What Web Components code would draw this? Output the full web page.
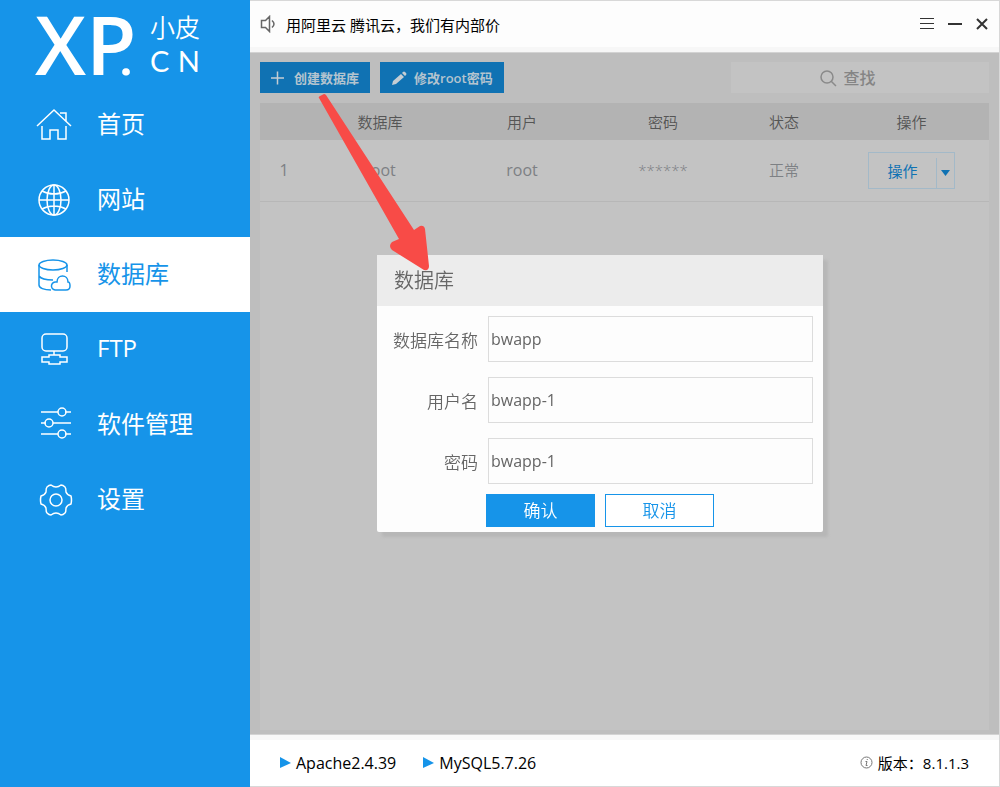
<!DOCTYPE html>
<html lang="zh-CN">
<head>
<meta charset="utf-8">
<title>小皮面板</title>
<style>
  body {
    margin: 0;
    font-family: "Open Sans", "Noto Sans CJK SC", sans-serif;
    font-size: 15px;
    color: #000;
  }
</style>
</head>
<body>
<xp-app></xp-app>

<script>
const icons = {
  home: '<path d="M1 18 18 2l17 16M24 5h6v8M6 18v13h8v-9h8v9h8V18"/>',
  globe: '<circle cx="18" cy="17" r="15"/><ellipse cx="18" cy="17" rx="7" ry="15"/><path d="M18 2v30M3 17h30M6 8c7 4 17 4 24 0M6 26c7-4 17-4 24 0"/>',
  database: '<ellipse cx="17" cy="7" rx="14" ry="5"/><path d="M3 7v20c0 3 5 5 12 5M31 7v7M3 18c2 3 7 4 14 4M20 32a4 4 0 0 1-1-8q2 0 2 0c0-8 11-8 11 0q2 0 2 4t-4 4z"/>',
  ftp: '<rect x="6" y="1" width="25" height="17" rx="4"/><path d="M18 18v4M13 22h11v2h7v5h-7v2H13v-2H6v-5h7z"/>',
  sliders: '<path d="M5 4h17M29 4h6M5 15h5M17 15h18M5 26h17M29 26h6"/><circle cx="26" cy="4" r="4"/><circle cx="13" cy="15" r="4"/><circle cx="26" cy="26" r="4"/>',
  gear: '<path d="M15 2q5 4 10 0 2 0 4 2 1 1 1 5 1 3 5 4 1 4 0 8-4 1-5 4 0 4-1 5-2 2-4 2-5-4-10 0-2 0-4-2-1-1-1-5-1-3-5-4-1-4 0-8 4-1 5-4 0-4 1-5 2-2 4-2z"/><circle cx="20" cy="17" r="6"/>'
}

// 基底類別，把 template 放進 shadow root
class XpElement extends HTMLElement {
  constructor() {
    super();
    this.attachShadow({ mode: 'open' });
    this.shadowRoot.innerHTML = this.render();
  }
  render() {
    return '<slot></slot>'
  }
}

class XpLogo extends XpElement {
  render() {
    return `
      <style>
        :host {
          display: flex;
          align-items: center;
          height: 87px;
          padding-left: 35px;
          box-sizing: border-box;
          color: #fff;
        }
        .big {
          display: flex;
          align-items: baseline;
          width: 115px;
          padding-bottom: 2px;
          font: 600 82px/84px "Open Sans", sans-serif;
        }
        .dot {
          margin-left: -18px;
          font: 500 56px/56px Roboto, sans-serif;
        }
        .small {
          width: 50px;
          font-size: 25px;
          line-height: 34px;
          font-weight: 350;
        }
        .small div {
          display: flex;
          justify-content: space-between;
        }
        .cn {
          font-family: Lato, sans-serif;
          font-size: 29px;
          font-weight: 400;
        }
      </style>
      <div class="big"><span>XP</span><span class="dot">.</span></div>
      <div class="small">
        <div>小皮</div>
        <div class="cn"><span>C</span><span>N</span></div>
      </div>
    `
  }
}

class XpNavItem extends XpElement {
  render() {
    return `
      <style>
        :host {
          display: block;
          color: #fff;
        }
        :host([active]) {
          background: #fff;
          color: #1694e9;
        }
        a {
          display: flex;
          align-items: center;
          gap: 21px;
          height: 75px;
          padding-left: 36px;
          color: inherit;
          font-size: 24px;
          text-decoration: none;
        }
        span {
          padding-bottom: 4px;
        }
        svg {
          width: 40px;
          height: 34px;
          fill: none;
          stroke: currentColor;
          stroke-width: 1.5;
          overflow: visible;
        }
      </style>
      <a href="#"><svg viewBox="0 0 40 34">${icons[this.getAttribute('icon')]}</svg><span><slot></slot></span></a>
    `
  }
}

class XpSidebar extends XpElement {
  render() {
    return `
      <style>
        :host {
          display: block;
          flex: none;
          width: 250px;
          background: #1694e9;
        }
      </style>
      <xp-logo></xp-logo>
      <nav>
        <xp-nav-item icon="home">首页</xp-nav-item>
        <xp-nav-item icon="globe">网站</xp-nav-item>
        <xp-nav-item icon="database" active>数据库</xp-nav-item>
        <xp-nav-item icon="ftp">FTP</xp-nav-item>
        <xp-nav-item icon="sliders">软件管理</xp-nav-item>
        <xp-nav-item icon="gear">设置</xp-nav-item>
      </nav>
    `
  }
}

class XpTitlebar extends XpElement {
  render() {
    return `
      <style>
        :host {
          display: flex;
          align-items: center;
          height: 53px;
          padding: 0 10px 5px;
          box-sizing: border-box;
          border-top: 1px solid #d8d8d8;
          border-bottom: 1px solid #d3d3d3;
          background: linear-gradient(#fdfdfd 46px, #f7f7f7 46px);
        }
        p {
          flex: 1;
          margin: 0 0 0 10px;
        }
        svg {
          display: block;
          fill: none;
          stroke: #333;
        }
        .speaker {
          stroke: #666;
          stroke-width: 1.5;
        }
        .tools {
          display: flex;
          gap: 12px;
        }
        button {
          padding: 0;
          border: 0;
          background: none;
        }
      </style>
      <svg class="speaker" width="16" height="18" viewBox="0 0 16 18"><path d="M1.500 5.500h4l4-4v15l-4-4h-4zM12 5.500q4 3.500 0 7"/></svg>
      <p>用阿里云 腾讯云，我们有内部价</p>
      <div class="tools">
        <button aria-label="菜单"><svg width="16" height="16"><path d="M1 2.500h14M1 7.500h14M1 12.500h14"/></svg></button>
        <button aria-label="最小化"><svg width="16" height="16" stroke-width="2"><path d="M1 8h14"/></svg></button>
        <button aria-label="关闭"><svg width="14" height="16" stroke-width="2"><path d="m2 3 10 10M12 3 2 13"/></svg></button>
      </div>
    `
  }
}

class XpToolButton extends XpElement {
  render() {
    return `
      <style>
        :host {
          display: block;
        }
        button {
          display: flex;
          align-items: center;
          gap: 6px;
          height: 31px;
          padding: 0 11px 0 10px;
          border: 0;
          background: #1072b3;
          color: #b4c4cf;
          font: 600 13px/20px "Open Sans", "Noto Sans CJK SC", sans-serif;
        }
      </style>
      <button><slot name="icon"></slot><slot></slot></button>
    `
  }
}

class XpToolbar extends XpElement {
  render() {
    return `
      <style>
        :host {
          display: flex;
          gap: 10px;
          color: #808080;
        }
        .search {
          display: flex;
          align-items: center;
          justify-content: center;
          gap: 7px;
          width: 258px;
          height: 31px;
          margin-left: auto;
          background: #c3c3c3;
        }
        input {
          width: 58px;
          padding: 0;
          border: 0;
          background: none;
          font: 500 16px/24px "Open Sans", "Noto Sans CJK SC", sans-serif;
        }
        input::placeholder {
          color: #858585;
          opacity: 1;
        }
      </style>
      <xp-tool-button>
        <svg slot="icon" width="18" height="16" stroke="#c5cdd3" stroke-width="1.5"><path d="M1 8h13M7.500 1.500v13"/></svg>创建数据库
      </xp-tool-button>
      <xp-tool-button>
        <svg slot="icon" width="18" height="16" fill="#c5cdd3"><path d="m2 15 1-4 8-7 3 3-8 7zM12 3l1-1q1-1 2 0l1 1q1 1 0 2l-1 1z"/></svg>修改root密码
      </xp-tool-button>
      <label class="search">
        <svg width="18" height="18" fill="none" stroke="#8a8a8a" stroke-width="1.5"><circle cx="8" cy="8" r="6"/><path d="m12 12 5 5"/></svg>
        <input type="text" placeholder="查找" aria-label="查找">
      </label>
    `
  }
}

class XpActionButton extends XpElement {
  render() {
    return `
      <style>
        :host {
          display: inline-flex;
          width: 87px;
          height: 37px;
          box-sizing: border-box;
          border: 1px solid #a3b9c8;
          vertical-align: middle;
        }
        button {
          padding: 0;
          border: 0;
          background: none;
          color: #1072b3;
          font: inherit;
        }
        .text {
          flex: 1;
          font-weight: 400;
        }
        .more {
          width: 18px;
          margin-top: 5px;
          border-left: 1px solid #a3b9c8;
        }
        svg {
          display: block;
          margin: auto;
        }
      </style>
      <button class="text"><slot></slot></button>
      <button class="more" aria-label="更多"><svg width="9" height="6"><path d="M0 0h9L4.500 6z" fill="#1072b3"/></svg></button>
    `
  }
}

class XpTable extends XpElement {
  render() {
    return `
      <style>
        :host {
          display: block;
          flex: 1;
          background: #c3c3c3;
        }
        table {
          width: 100%;
          table-layout: fixed;
          border-collapse: collapse;
          text-align: center;
        }
        th {
          height: 37px;
          padding: 0;
          background: #b3b3b3;
          color: #555;
          font-weight: 350;
        }
        td {
          height: 59px;
          padding: 0 0 2px;
          border-bottom: 1px solid #b7b7b7;
          color: #7d8084;
          font-weight: 350;
        }
        td:last-child {
          height: 61px;
          padding: 0;
        }
        .latin {
          font-size: 16px;
          font-weight: 400;
        }
      </style>
      <table>
        <colgroup>
          <col style="width: 48px"><col style="width: 144px"><col style="width: 140px">
          <col style="width: 142px"><col style="width: 100px"><col style="width: 155px">
        </colgroup>
        <thead>
          <tr><th></th><th>数据库</th><th>用户</th><th>密码</th><th>状态</th><th>操作</th></tr>
        </thead>
        <tbody>
          <tr>
            <td class="latin">1</td><td class="latin">root</td><td class="latin">root</td><td>******</td><td>正常</td>
            <td><xp-action-button>操作</xp-action-button></td>
          </tr>
        </tbody>
      </table>
    `
  }
}

class XpStatusbar extends XpElement {
  render() {
    return `
      <style>
        :host {
          display: flex;
          align-items: center;
          gap: 27px;
          height: 53px;
          padding: 4px 30px 0;
          box-sizing: border-box;
          border-top: 1px solid #d3d3d3;
          border-bottom: 1px solid #d8d8d8;
          background: linear-gradient(#f7f7f7 5px, #fff 5px);
        }
        span {
          display: flex;
          align-items: center;
          gap: 5px;
        }
        .service {
          font-size: 16px;
        }
        .version {
          margin-left: auto;
        }
      </style>
      <span class="service"><svg width="11" height="11"><path d="M0 0v11l11-5z" fill="#1694e9"/></svg>Apache2.4.39</span>
      <span class="service"><svg width="11" height="11"><path d="M0 0v11l11-5z" fill="#1694e9"/></svg>MySQL5.7.26</span>
      <span class="version">
        <svg width="13" height="13" fill="none" stroke="#777"><circle cx="6.500" cy="6.500" r="5.500"/><path d="M7.500 3 7 4M5.500 5.500H7L6 9.500h1.500" /></svg>版本：8.1.1.3
      </span>
    `
  }
}

class XpField extends XpElement {
  render() {
    return `
      <style>
        :host {
          display: flex;
          align-items: center;
          gap: 10px;
        }
        label {
          width: 91px;
          color: #666;
          font-size: 17px;
          font-weight: 350;
          text-align: right;
        }
        input {
          flex: 1;
          min-width: 0;
          height: 46px;
          padding: 0 2px;
          box-sizing: border-box;
          border: 1px solid #dcdcdc;
          background: #fdfdfd;
          color: #666;
          font: 16px "Open Sans", "Noto Sans CJK SC", sans-serif;
        }
      </style>
      <label for="field">${this.getAttribute('label')}</label>
      <input id="field" type="text" value="${this.getAttribute('value')}">
    `
  }
}

class XpDialog extends XpElement {
  render() {
    return `
      <style>
        :host {
          position: fixed;
          inset: 0 0 0 200px;
          display: flex;
          align-items: center;
          justify-content: center;
        }
        section {
          position: relative;
          width: 446px;
          border-radius: 2px;
          background: #fdfdfd;
          box-shadow: 5px 5px 3px #b7b7b7;
        }
        h2 {
          margin: 0;
          padding: 0 17px;
          background: #ececec;
          color: #666;
          font-size: 20px;
          font-weight: 350;
          line-height: 51px;
        }
        form {
          display: grid;
          gap: 15px;
          padding: 10px;
        }
        .buttons {
          display: flex;
          gap: 10px;
          padding: 0 0 5px 109px;
        }
        button {
          width: 109px;
          height: 33px;
          padding: 0;
          border: 1px solid #1694e9;
          background: #fff;
          color: #1694e9;
          font: 350 17px/30px "Open Sans", "Noto Sans CJK SC", sans-serif;
        }
        .primary {
          background: #1694e9;
          color: #fff;
        }
        /* 指向標題的箭頭，蓋在對話框上 */
        .arrow {
          position: absolute;
          left: -60px;
          top: -162px;
        }
      </style>
      <section role="dialog" aria-labelledby="title">
        <h2 id="title"><slot name="title"></slot></h2>
        <form><slot></slot></form>
        <div class="buttons">
          <button class="primary">确认</button>
          <button>取消</button>
        </div>
        <svg class="arrow" width="116" height="180" viewBox="317 93 116 180"><path fill="#f84b47" d="M319 98q-1-1 1-2l4-2q1 0 2 1l88 135 6-4q4-1 5 3l4 37q0 5-5 4l-32-20q-4-4 0-8l7-3z"/></svg>
      </section>
    `
  }
}

class XpApp extends XpElement {
  render() {
    return `
      <style>
        :host {
          display: flex;
          min-height: 100vh;
        }
        .window {
          display: flex;
          flex: 1;
          flex-direction: column;
          border-right: 1px solid #d8d8d8;
        }
        main {
          display: flex;
          flex: 1;
          flex-direction: column;
          gap: 10px;
          padding: 9px 10px 4px;
          background: #bebebe;
        }
      </style>
      <xp-sidebar></xp-sidebar>
      <div class="window">
        <xp-titlebar></xp-titlebar>
        <main>
          <xp-toolbar></xp-toolbar>
          <xp-table></xp-table>
        </main>
        <xp-statusbar></xp-statusbar>
      </div>
      <xp-dialog>
        <span slot="title">数据库</span>
        <xp-field label="数据库名称" value="bwapp"></xp-field>
        <xp-field label="用户名" value="bwapp-1"></xp-field>
        <xp-field label="密码" value="bwapp-1"></xp-field>
      </xp-dialog>
    `
  }
}

customElements.define('xp-logo', XpLogo);
customElements.define('xp-nav-item', XpNavItem);
customElements.define('xp-sidebar', XpSidebar);
customElements.define('xp-titlebar', XpTitlebar);
customElements.define('xp-tool-button', XpToolButton);
customElements.define('xp-toolbar', XpToolbar);
customElements.define('xp-action-button', XpActionButton);
customElements.define('xp-table', XpTable);
customElements.define('xp-statusbar', XpStatusbar);
customElements.define('xp-field', XpField);
customElements.define('xp-dialog', XpDialog);
customElements.define('xp-app', XpApp);
</script>
</body>
</html>
